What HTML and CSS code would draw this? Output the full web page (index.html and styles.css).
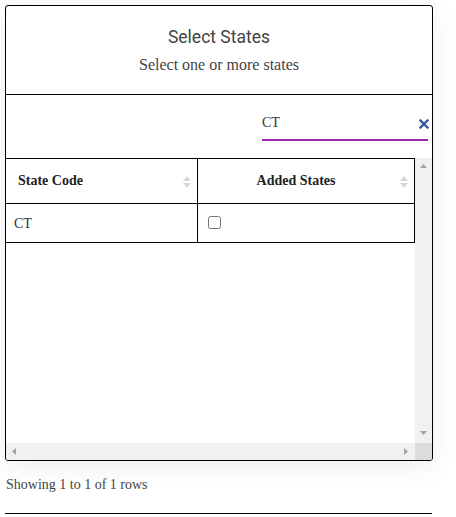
FILE: index.html
```html
<!DOCTYPE html>
<html>
<head>
<meta charset="utf-8">
<link rel="stylesheet" href="styles.css">
</head>
<body>
<div class="card">
  <div class="card-header">
    <div class="title">Select States</div>
    <div class="subtitle">Select one or more states</div>
  </div>
  <div class="search-row">
    <div class="search">
      <span class="search-text">CT</span>
      <svg class="clear" width="10" height="10" viewBox="0 0 10 10"><path d="M1.5 1.5 L8.5 8.5 M8.5 1.5 L1.5 8.5" stroke="#34589c" stroke-width="2.4" stroke-linecap="square"/></svg>
    </div>
  </div>
  <div class="scroll">
    <div class="viewport">
      <table class="grid">
        <colgroup>
          <col class="col1">
          <col class="col2">
        </colgroup>
        <thead>
          <tr>
            <th class="c1"><span>State Code</span>
              <svg class="sort" width="8" height="14" viewBox="0 0 8 14"><path d="M0 6 L4 1 L8 6 Z M0 8 L4 13 L8 8 Z" fill="#d6d6d6"/></svg>
            </th>
            <th class="c2"><span>Added States</span>
              <svg class="sort" width="8" height="14" viewBox="0 0 8 14"><path d="M0 6 L4 1 L8 6 Z M0 8 L4 13 L8 8 Z" fill="#d6d6d6"/></svg>
            </th>
          </tr>
        </thead>
        <tbody>
          <tr>
            <td class="c1">CT</td>
            <td class="c2"><input type="checkbox" class="check"></td>
          </tr>
        </tbody>
      </table>
    </div>
    <div class="vbar">
      <svg width="7" height="4" viewBox="0 0 7 4"><path d="M0 4 L3.5 0 L7 4 Z" fill="#a3a3a3"/></svg>
      <svg width="7" height="4" viewBox="0 0 7 4"><path d="M0 0 L3.5 4 L7 0 Z" fill="#a3a3a3"/></svg>
    </div>
    <div class="hbar">
      <svg width="4" height="7" viewBox="0 0 4 7"><path d="M4 0 L0 3.5 L4 7 Z" fill="#a3a3a3"/></svg>
      <svg width="4" height="7" viewBox="0 0 4 7"><path d="M0 0 L4 3.5 L0 7 Z" fill="#a3a3a3"/></svg>
    </div>
    <div class="corner"></div>
  </div>
</div>
<div class="footer">Showing 1 to 1 of 1 rows</div>
<div class="rule"></div>
</body>
</html>
```

FILE: styles.css
```css
html, body {
  margin: 0;
  background: #ffffff;
}
body {
  padding: 5px;
  font-family: "Liberation Serif", "Times New Roman", serif;
  color: #333;
}
.card {
  width: 428px;
  height: 456px;
  box-sizing: border-box;
  border: 1px solid #000;
  border-radius: 3px;
  display: flex;
  flex-direction: column;
  box-shadow: 0 6px 28px rgba(0, 0, 0, 0.07);
  background: #fff;
  overflow: hidden;
}
.card-header {
  height: 88px;
  border-bottom: 1px solid #000;
  display: flex;
  flex-direction: column;
  align-items: center;
}
.title {
  font-family: Roboto, "Liberation Sans", sans-serif;
  font-size: 17.5px;
  color: #444;
  line-height: 20px;
  margin-top: 21px;
}
.subtitle {
  font-size: 16px;
  color: #444;
  line-height: 18px;
  margin-top: 9px;
}
.search-row {
  height: 63px;
  display: flex;
  justify-content: flex-end;
  padding-right: 4px;
}
.search {
  width: 166px;
  height: 46px;
  box-sizing: border-box;
  border-bottom: 2px solid #9c27b0;
  display: flex;
  align-items: flex-end;
  justify-content: space-between;
  padding-bottom: 7px;
}
.search-text {
  font-size: 14px;
  color: #333;
  line-height: 16px;
  margin-bottom: 1px;
}
.clear {
  display: block;
  margin-bottom: 3px;
  margin-right: -1px;
}
.scroll {
  flex: 1;
  display: grid;
  grid-template-columns: 1fr 17px;
  grid-template-rows: 1fr 17px;
  min-height: 0;
}
.viewport {
  overflow: hidden;
}
.grid {
  border-collapse: separate;
  border-spacing: 0;
  width: 409px;
  table-layout: fixed;
  color: #222;
}
.col1 {
  width: 192px;
}
.col2 {
  width: 217px;
}
.grid th, .grid td {
  border-right: 1px solid #000;
  border-bottom: 1px solid #000;
  font-size: 14px;
  text-align: left;
}
.grid th {
  border-top: 1px solid #000;
  height: 44px;
  padding: 0;
  position: relative;
  font-weight: bold;
}
.grid th.c1 {
  padding-left: 12px;
}
.grid th.c2 {
  text-align: center;
  padding-left: 8px;
  padding-right: 28px;
}
.sort {
  position: absolute;
  right: 6px;
  top: 16px;
}
.grid td {
  height: 37px;
  padding: 1px 8px 0;
  color: #333;
}
.grid td.c2 {
  padding-left: 10px;
}
.check {
  margin: 0;
  width: 13px;
  height: 13px;
  vertical-align: -1px;
}
.vbar {
  background: #f1f1f1;
  display: flex;
  flex-direction: column;
  justify-content: space-between;
  align-items: center;
  padding: 6px 0 8px;
}
.vbar svg, .hbar svg {
  display: block;
}
.hbar {
  background: #f1f1f1;
  display: flex;
  justify-content: space-between;
  align-items: center;
  padding: 0 7px 0 6px;
}
.corner {
  background: #dcdcdc;
}
.footer {
  margin-top: 16px;
  padding-left: 1px;
  font-size: 14px;
  line-height: 16px;
  color: #444;
}
.rule {
  width: 427px;
  border-top: 1px solid #000;
  margin-top: 20px;
}
```
